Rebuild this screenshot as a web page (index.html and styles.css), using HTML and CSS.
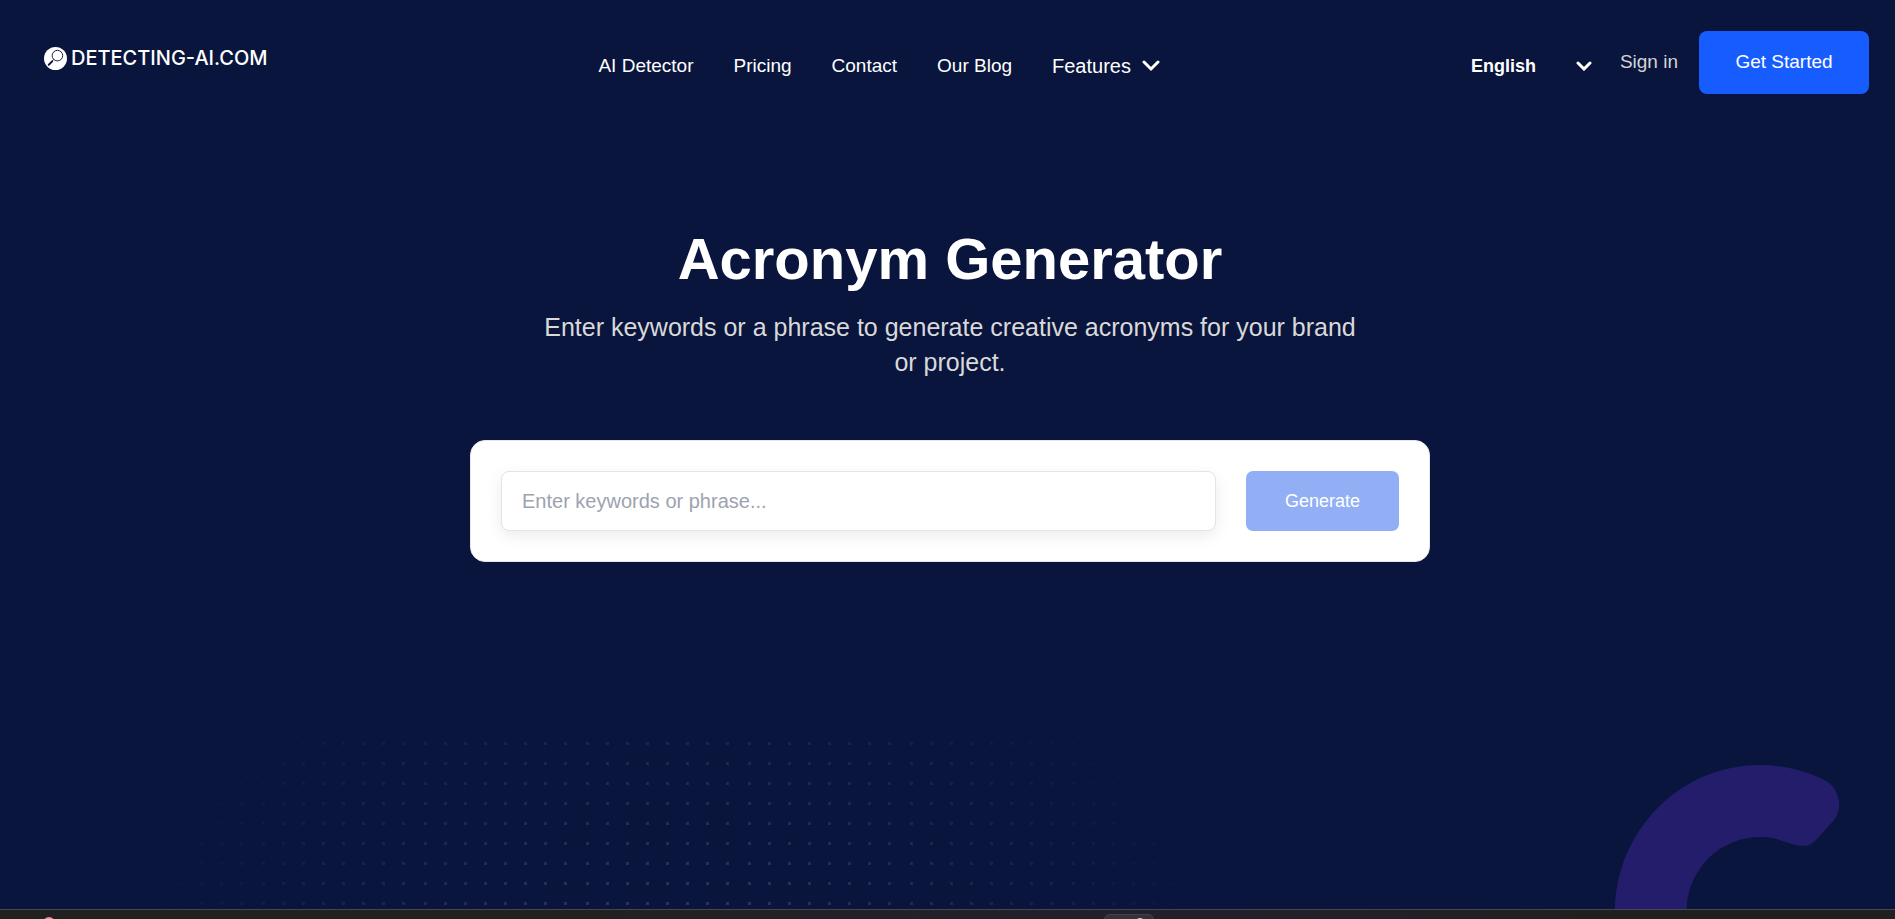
FILE: index.html
```html
<!DOCTYPE html>
<html lang="en">

<head>
  <meta charset="UTF-8">
  <meta name="viewport" content="width=device-width, initial-scale=1.0">
  <title>Acronym Generator</title>
  <link rel="stylesheet" href="styles.css">
</head>

<body>
  <header class="header">
    <a href="#" class="logo">
      <svg class="logo-icon" viewBox="0 0 24 24" aria-hidden="true">
        <circle cx="12" cy="12" r="12" fill="#fff" />
        <circle cx="14" cy="9" r="5.500" fill="none" stroke="#09153d" stroke-width="1" />
        <path d="M10 13 L8.500 15" stroke="#09153d" stroke-width="1" />
        <path d="M8.500 15 L5 18.500" stroke="#09153d" stroke-width="2" stroke-linecap="round" />
      </svg>
      <span>DETECTING-AI.COM</span>
    </a>

    <nav class="nav">
      <a href="#">AI Detector</a>
      <a href="#">Pricing</a>
      <a href="#">Contact</a>
      <a href="#">Our Blog</a>
      <button type="button" class="nav-button">
        Features
        <svg class="chevron" viewBox="0 0 18 12" aria-hidden="true">
          <path d="M2 2 L9 9 L16 2" />
        </svg>
      </button>
    </nav>

    <div class="actions">
      <div class="language">
        <select class="language-select" aria-label="Language">
          <option>English</option>
        </select>
        <svg class="chevron-small" viewBox="0 0 16 10" aria-hidden="true">
          <path d="M2 2 L8 8 L14 2" />
        </svg>
      </div>
      <a href="#" class="sign-in">Sign in</a>
      <button type="button" class="get-started">Get Started</button>
    </div>
  </header>

  <main class="main">
    <h1>Acronym Generator</h1>
    <p class="subtitle">Enter keywords or a phrase to generate creative acronyms for your brand or project.</p>

    <form class="card">
      <input type="text" class="keywords" name="keywords" aria-label="Keywords" placeholder="Enter keywords or phrase...">
      <button type="submit" class="generate" disabled>Generate</button>
    </form>

    <!-- background shapes -->
    <svg class="dots" aria-hidden="true">
      <defs>
        <pattern id="dot-row" width="162" height="20" patternUnits="userSpaceOnUse">
          <g fill="#fff">
            <rect x="1" y="2" width="3" height="3" />
            <rect x="21" y="2" width="3" height="3" />
            <rect x="41" y="2" width="3" height="3" />
            <rect x="61" y="2" width="3" height="3" />
            <rect x="81" y="2" width="3" height="3" />
            <rect x="101" y="2" width="3" height="3" />
            <rect x="121" y="2" width="3" height="3" />
            <rect x="141" y="2" width="3" height="3" />
          </g>
        </pattern>
      </defs>
      <rect width="100%" height="100%" fill="url(#dot-row)" />
    </svg>
    <svg class="arc" viewBox="0 0 315 169" aria-hidden="true">
      <path fill="#241d6c" d="M35 169 C37 89 101 25 180 25 C204 25 227 31 246 41 C256 46 260 60 259 67 C258 73 257 76 254 80 L239 97 C233 103 230 106 223 106 C214 106 205 101 196 99 C190 97 184 97 180 97 C140 97 108 129 106.500 169 Z" />
    </svg>
  </main>

  <footer class="taskbar">
    <svg class="taskbar-dot" viewBox="0 0 12 12" aria-hidden="true">
      <circle cx="6" cy="6" r="6" fill="#ff8c96" />
    </svg>
    <span class="taskbar-tab">
      <svg viewBox="0 0 10 10" aria-hidden="true">
        <circle cx="5" cy="5" r="5" fill="#c9d0dc" />
      </svg>
    </span>
  </footer>
</body>

</html>
```
FILE: styles.css
```css
* {
  box-sizing: border-box;
}

body {
  margin: 0;
  height: 100vh;
  display: flex;
  flex-direction: column;
  overflow: hidden;
  background-color: #09153d;
  color: white;
  font-family: "Liberation Sans", Arial, sans-serif;
  font-size: 19px;
}

a {
  color: inherit;
  text-decoration: none;
}

button,
input,
select {
  font-family: inherit;
  font-size: inherit;
}

button {
  border: 0;
  cursor: pointer;
}

.header {
  display: flex;
  justify-content: space-between;
  align-items: flex-start;
  padding: 31px 26px 0 44px;
}

.logo {
  display: flex;
  align-items: center;
  gap: 4px;
  height: 54px;
  padding-right: 20px;
  font-family: Inter, sans-serif;
  font-size: 20px;
  font-weight: 500;
}

.logo-icon {
  width: 23px;
  height: 23px;
}

.nav {
  display: flex;
  align-items: center;
  gap: 40px;
  height: 70px;
}

.nav-button {
  display: flex;
  align-items: center;
  gap: 11px;
  padding: 0;
  background: none;
  color: white;
  font-size: 20px;
}

.chevron {
  width: 18px;
  height: 12px;
  fill: none;
  stroke: white;
  stroke-width: 3;
  stroke-linecap: round;
}

.actions {
  display: flex;
  align-items: flex-start;
}

.language {
  display: flex;
  align-items: center;
  height: 70px;
}

.language-select {
  appearance: none;
  width: 105px;
  padding: 0;
  border: 0;
  background: none;
  color: white;
  font-size: 18px;
  font-weight: bold;
}

.language-select option {
  color: black;
}

.chevron-small {
  width: 16px;
  height: 10px;
  fill: none;
  stroke: white;
  stroke-width: 3;
  stroke-linecap: round;
}

.sign-in {
  margin: 0 21px 0 28px;
  line-height: 62px;
  color: #d4d4d4;
}

.get-started {
  width: 170px;
  height: 63px;
  padding: 0 0 2px;
  border-radius: 8px;
  background-color: #175cff;
  color: white;
}

.main {
  position: relative;
  flex: 1;
  display: flex;
  flex-direction: column;
  align-items: center;
  padding: 120px 20px 0 25px;
}

h1 {
  margin: 0;
  font-size: 58px;
  line-height: 76px;
}

.subtitle {
  max-width: 840px;
  margin: 13px 0 60px;
  color: #d9d9d9;
  font-size: 25px;
  line-height: 35px;
  text-align: center;
}

.card {
  display: flex;
  gap: 30px;
  width: 100%;
  max-width: 960px;
  padding: 30px;
  border: 1px solid #e5e7eb;
  border-radius: 15px;
  background-color: white;
}

.keywords {
  flex: 1;
  height: 60px;
  padding: 0 20px;
  border: 1px solid #e2e4e9;
  border-radius: 8px;
  background-color: white;
  box-shadow: 0 5px 16px rgba(0, 0, 0, 0.08);
  font-size: 20px;
}

.keywords::placeholder {
  color: #9ca3af;
}

.generate {
  width: 153px;
  border-radius: 7px;
  background-color: #92aff5;
  color: white;
  font-size: 18px;
}

.dots {
  position: absolute;
  left: 99px;
  bottom: 0;
  width: 1200px;
  height: 169px;
  opacity: 0.14;
  pointer-events: none;
  mask-image: radial-gradient(560px 430px at 577px 250px, black 15%, transparent);
}

.arc {
  position: absolute;
  right: 0;
  bottom: 0;
  width: 315px;
  height: 169px;
}

.taskbar {
  position: relative;
  height: 10px;
  overflow: hidden;
  border-top: 1px solid #47474c;
  background: linear-gradient(90deg, #212121 30%, #24202b 55%, #24202b 65%, #202020 85%);
}

.taskbar-dot {
  position: absolute;
  left: 43px;
  top: 7px;
  width: 12px;
}

.taskbar-tab {
  position: absolute;
  left: 1104px;
  top: 4px;
  width: 50px;
  height: 40px;
  border: 1px solid #44414b;
  border-radius: 6px;
  background-color: #35313b;
}

.taskbar-tab svg {
  position: absolute;
  left: 30px;
  top: 3px;
  width: 10px;
}
```
